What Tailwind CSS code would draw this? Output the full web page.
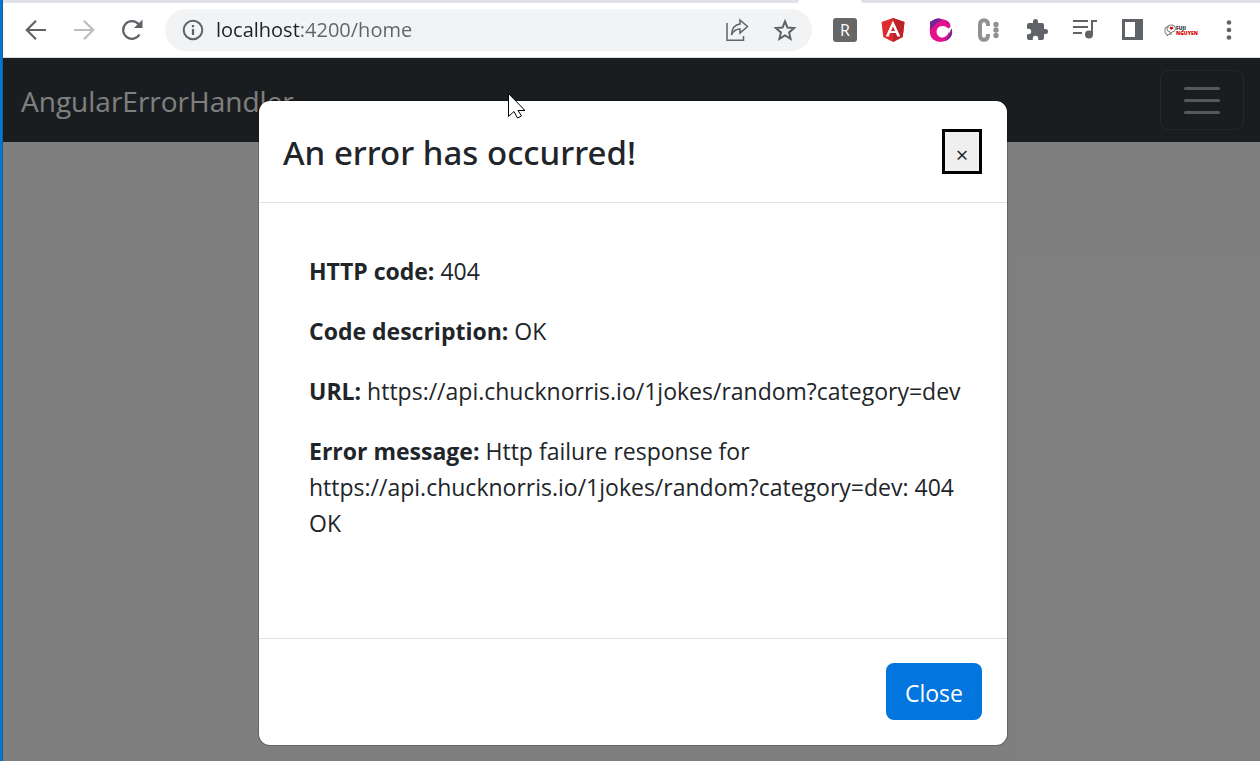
<!DOCTYPE html>
<html lang="en">
<head>
  <meta charset="UTF-8" />
  <meta name="viewport" content="width=device-width, initial-scale=1.0"/>
  <title>AngularErrorHandler</title>
  <script src="https://cdn.jsdelivr.net/npm/@tailwindcss/browser@4"></script>
</head>
<body class="flex h-screen overflow-hidden bg-white font-['Segoe_UI','Open_Sans',sans-serif] text-[#212529]">

  <!-- Window edge -->
  <div class="w-[3px] shrink-0 border-r border-[#1b5f96] bg-[#0078d7]"></div>

  <div class="flex min-w-0 flex-1 flex-col">

    <!-- Tab strip -->
    <div class="flex h-[3px] shrink-0 justify-end gap-[62px] bg-white">
      <div class="flex-1 rounded-br-lg bg-[#dee1e6]"></div>
      <div class="w-[399px] rounded-bl-lg bg-[#dee1e6]"></div>
    </div>

    <!-- Browser toolbar -->
    <header class="flex h-[55px] shrink-0 items-center border-b border-[#dadce0] bg-white pr-[21px] pl-[21px] text-[#5f6368]">
      <div class="flex gap-6">
        <button aria-label="Back" class="size-6">
          <svg viewBox="0 0 24 24" class="size-6" fill="none" stroke="currentColor" stroke-width="2.2"><path d="M22 12H3M12 2.8 2.8 12 12 21.2"/></svg>
        </button>
        <button aria-label="Forward" class="size-6 text-[#bbbdbf]">
          <svg viewBox="0 0 24 24" class="size-6" fill="none" stroke="currentColor" stroke-width="2.2"><path d="M2 12h19M12 2.8 21.2 12 12 21.2"/></svg>
        </button>
        <button aria-label="Reload" class="size-6">
          <svg viewBox="0 0 24 24" class="size-6"><path d="M19.500 16.500A8.800 8.800 0 1 1 18.600 6.200" fill="none" stroke="currentColor" stroke-width="2.2"/><path d="M22.500 1.500V10H14z" fill="currentColor"/></svg>
        </button>
      </div>

      <div class="ml-[21px] flex h-[42px] flex-1 items-center rounded-full bg-[#f1f3f4] pr-[15px] pl-4">
        <svg viewBox="0 0 24 24" class="size-6 shrink-0" fill="none" stroke="currentColor" stroke-width="2"><circle cx="12" cy="12" r="9.3"/><path d="M12 11v6M12 7v2.3" stroke-width="2.2"/></svg>
        <!-- host is dark, the rest of the address grey -->
        <input id="url" type="text" aria-label="Address" value="localhost:4200/home" class="ml-[11px] min-w-0 flex-1 bg-linear-to-r from-[#202124] from-[84px] to-[#5f6368] to-[84px] bg-clip-text text-[20px] leading-7 text-transparent outline-none" />
        <div class="flex gap-6">
          <button aria-label="Share" class="size-6">
            <svg viewBox="0 0 24 24" class="size-6" fill="none" stroke="currentColor" stroke-width="1.5"><path d="M2 5v17.200h16.500V18"/><path d="M15 2l7.500 6.500L15 15v-4c-4 0-6.500 1.500-8.500 6C7 10 10 6.500 15 6z"/></svg>
          </button>
          <button aria-label="Bookmark this tab" class="size-6">
            <svg viewBox="0 0 24 24" class="size-6" fill="none" stroke="currentColor" stroke-width="2"><path d="M12 3.500l2.500 6.100 6.600.5-5 4.300 1.500 6.400-5.600-3.400-5.600 3.400 1.500-6.400-5-4.300 6.600-.5z"/></svg>
          </button>
        </div>
      </div>

      <!-- Extensions -->
      <div class="ml-[21px] flex items-center gap-6">
        <button class="size-6 rounded-[3px] bg-[#676767] text-[16px] leading-6 text-white">R</button>
        <button aria-label="Angular" class="size-6">
          <svg viewBox="0 0 24 24" class="size-6"><path d="M12 0l11.500 4-1.800 15L12 24l-9.700-5L.5 4z" fill="#dd2c2f"/><path d="M12 0l11.500 4-1.800 15L12 24z" fill="#bd2328"/><path d="M12 2.500 4.700 18.500h3.100l1.300-3.400h5.800l1.300 3.400h3.100zm0 6 2 4.400h-4z" fill="#fff"/></svg>
        </button>
        <button aria-label="RxJS" class="size-6">
          <svg viewBox="0 0 24 24" class="size-6"><path d="M1 3.500C3 4 5 .5 9 .5c3 0 4 1 6 1 4 1 6.500 3.500 6.500 6.500 0 1.500-1 2.500-3 2-3-3-9-2.500-10.500 1.500S9.500 20 14 19.500c3-.5 5-3 6-6l.5 2 2-5c2 7-3 13-10 13.300C5 24 0 19 1 12.500c-1-2 .5-3 0-5 .5-1 0-3 0-4z" fill="#e6108f"/><path d="M1 3.500C3 4 5 .5 9 .5c1.500 0 3 .4 4 .7L8 5C5 7 4.500 9 2 11c-1.500-2-.5-2.500-1-3.500.5-1 0-3 0-4zM20.500 15.500l2-5c2.500 6-2 11.500-6.500 12.800 1.500-2 3.500-4 4.500-7.800zM17 4l3 2-1 1z" fill="#6f2796"/></svg>
        </button>
        <button aria-label="Console" class="size-6 text-[#919191]">
          <svg viewBox="0 0 24 24" class="size-6"><path d="M11 8V6.500c0-2.500-1.500-4.300-4-4.300s-4 1.800-4 4.300v11c0 2.500 1.500 4.300 4 4.300s4-1.800 4-4.300V16" fill="none" stroke="currentColor" stroke-width="4"/><g fill="currentColor"><circle cx="19" cy="6.500" r="2.700"/><circle cx="19" cy="12" r="2.700"/><circle cx="19" cy="17.500" r="2.700"/></g></svg>
        </button>
        <button aria-label="Extensions" class="size-6">
          <svg viewBox="0 0 24 24" class="size-6" fill="currentColor"><path d="M20.500 11H19V7a2 2 0 0 0-2-2h-4V3.500a2.500 2.500 0 0 0-5 0V5H4a2 2 0 0 0-2 2v3.800h1.500a2.700 2.700 0 0 1 0 5.400H2V20a2 2 0 0 0 2 2h3.800v-1.500a2.700 2.700 0 0 1 5.400 0V22H17a2 2 0 0 0 2-2v-4h1.500a2.500 2.500 0 0 0 0-5z"/></svg>
        </button>
        <button aria-label="Media controls" class="size-6">
          <svg viewBox="0 0 24 24" class="size-6" fill="none" stroke="currentColor" stroke-width="2"><path d="M0 3h15M0 9h15M0 15h9M19 17V3h5"/><circle cx="16" cy="16.500" r="4" fill="currentColor" stroke="none"/></svg>
        </button>
        <button aria-label="Side panel" class="size-6">
          <svg viewBox="0 0 24 24" class="size-6" fill="currentColor" fill-rule="evenodd"><path d="M1 1h21v21H1zM4 4v15h10V4z"/></svg>
        </button>
        <button aria-label="Fuji Nguyen" class="-mr-[3px] -ml-[5px] h-6 w-[34px]">
          <svg viewBox="0 0 34 24" class="h-6 w-[34px]"><g fill="none" stroke="#777" stroke-width="1"><path d="M5 9H3a2 2 0 0 0-2 2v3a2 2 0 0 0 2 2v2l2-2h3"/><path d="M7 7h1a3 3 0 0 1 0 7l-2 2v-2a3.500 3.500 0 0 1 1-7z"/></g><path d="M7.500 12l-2-2 1-1.500 1 .7 1-.7 1 1.500z" fill="#d00"/><text x="12" y="12" font-family="Open Sans" font-size="5" font-weight="800" fill="#333">FUJI</text><text x="12" y="17" font-family="Open Sans" font-size="5" font-weight="800" fill="#d00">NGUYEN</text></svg>
        </button>
        <button aria-label="Menu" class="h-6 w-5">
          <svg viewBox="0 0 20 24" class="h-6 w-5" fill="currentColor"><circle cx="10" cy="4.500" r="2.300"/><circle cx="10" cy="12" r="2.300"/><circle cx="10" cy="19.500" r="2.300"/></svg>
        </button>
      </div>
    </header>

    <!-- Page -->
    <div class="relative flex-1 bg-white">
      <nav class="flex h-[84px] items-center justify-between bg-[#343a40] pr-4 pl-[18px]">
        <a href="#" class="pt-0.5 text-[28px] leading-10 text-white">AngularErrorHandler</a>
        <button aria-label="Toggle navigation" class="flex h-[60px] w-[84px] flex-col items-center justify-center gap-[9px] rounded-lg border border-white/10">
          <span class="h-[3px] w-9 rounded-full bg-white/60"></span>
          <span class="h-[3px] w-9 rounded-full bg-white/60"></span>
          <span class="h-[3px] w-9 rounded-full bg-white/60"></span>
        </button>
      </nav>

      <!-- Error dialog -->
      <div class="absolute inset-0 flex items-start justify-center bg-black/50 pt-[42px] pl-[3px]">
        <div role="dialog" aria-labelledby="title" class="w-[750px] rounded-xl border border-black/20 bg-white bg-clip-padding">
          <div class="flex items-start justify-between border-b border-[#dee2e6] py-7 pr-[25px] pl-6">
            <h4 id="title" class="pt-1 font-['Segoe_UI','Noto_Sans',sans-serif] text-[33px] leading-10 font-medium">An error has occurred!</h4>
            <button aria-label="Close" class="h-[45px] w-10 border-3 border-black bg-[#efefef] pt-1 text-[22px] leading-8">×</button>
          </div>
          <div class="flex min-h-[435px] flex-col gap-6 pt-[50px] pr-10 pl-[50px] text-[23px] leading-9">
            <p><strong>HTTP code:</strong> 404</p>
            <p><strong>Code description:</strong> OK</p>
            <p><strong>URL:</strong> https://api.chucknorris.io/1jokes/random?category=dev</p>
            <p><strong>Error message:</strong> Http failure response for https://api.chucknorris.io/1jokes/random?category=dev: 404 OK</p>
          </div>
          <div class="flex justify-end border-t border-[#dee2e6] pt-6 pr-[25px] pb-[25px]">
            <button class="h-[57px] w-24 rounded-lg bg-[#0275de] pt-1 text-[23px] text-white">Close</button>
          </div>
        </div>
      </div>

      <!-- Mouse pointer -->
      <svg viewBox="0 0 20 28" class="absolute top-[34px] left-[502px] h-7 w-5"><path d="M3.500 1.500v23l5.500-5 3.500 6.500 4-2-3.500-5.500h7z" fill="#fff" stroke="#000" stroke-width="1"/></svg>
    </div>
  </div>

</body>
</html>
